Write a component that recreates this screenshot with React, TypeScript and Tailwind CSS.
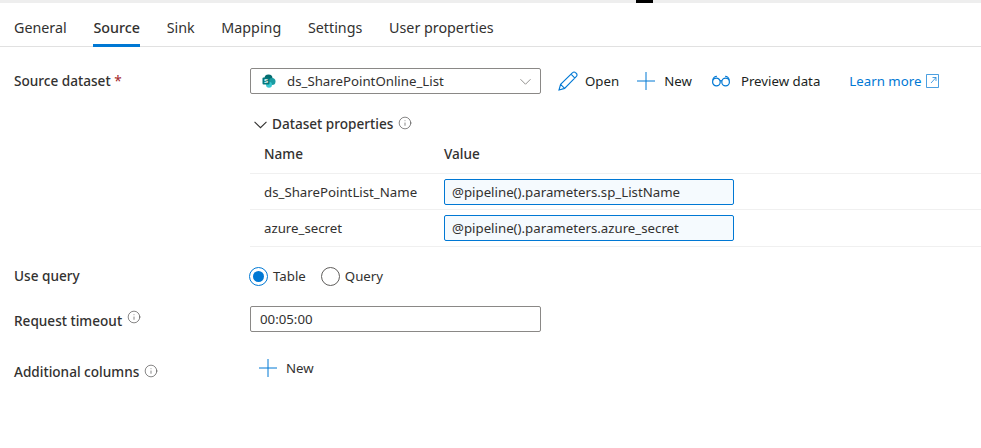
import React from 'react';
import { Info } from 'lucide-react';

const tabs = ['General', 'Source', 'Sink', 'Mapping', 'Settings', 'User properties'];

const InfoIcon = () => <Info size={14} strokeWidth={1} className="text-[#323130]" />;

const SharePointIcon = () => (
  <svg width="14" height="14" viewBox="0 0 14 14">
    <circle cx="6.5" cy="4.5" r="4" fill="#036c70" />
    <circle cx="10" cy="7.5" r="3.5" fill="#1a9ba1" />
    <circle cx="7" cy="10.8" r="3" fill="#37c6d0" />
    <rect x="0.5" y="3.5" width="7" height="7" rx="1" fill="#03787c" />
    <text x="4" y="9" textAnchor="middle" fontSize="6" fontWeight="700" fill="#fff" fontFamily="'Liberation Sans', sans-serif">S</text>
  </svg>
);

const PlusIcon = () => (
  <svg width="18" height="18" viewBox="0 0 18 18" className="shrink-0 text-[#0078d4]">
    <path d="M9 0v18M0 9h18" fill="none" stroke="currentColor" strokeWidth="1" />
  </svg>
);

const Chevron = ({ w, className }: { w: number; className: string }) => (
  <svg width={w} height={w} viewBox="0 0 12 12" className={className}>
    <path d="M0.5 3.5 6 9l5.5-5.5" fill="none" stroke="currentColor" strokeWidth="1" />
  </svg>
);

const PencilIcon = () => (
  <svg width="20" height="20" viewBox="0 0 20 20" className="shrink-0 text-[#0078d4]">
    <path
      d="M1 19l1.6-5.6L14.6 1.6a2 2 0 0 1 2.9 0l.9.9a2 2 0 0 1 0 2.9L6.6 17.4 1 19zM2.6 13.4l4 4M13 3.2l3.9 3.9"
      fill="none"
      stroke="currentColor"
      strokeWidth="1.1"
    />
  </svg>
);

const GlassesIcon = () => (
  <svg width="18" height="12" viewBox="0 0 18 12" className="shrink-0 text-[#0078d4]">
    <ellipse cx="4.4" cy="7" rx="3.8" ry="3.9" fill="none" stroke="currentColor" strokeWidth="1.2" />
    <ellipse cx="13.6" cy="7" rx="3.8" ry="3.9" fill="none" stroke="currentColor" strokeWidth="1.2" />
    <path d="M8 6c.6-.4 1.400-.4 2 0M.6 5.500C1 3 2.500 1.200 5 1.200M17.400 5.500C17 3 15.500 1.200 13 1.200" fill="none" stroke="currentColor" strokeWidth="1.1" />
  </svg>
);

const LinkIcon = () => (
  <svg width="13" height="14" viewBox="0 0 13 14" className="ml-[5px] shrink-0 text-[#0078d4]">
    <path d="M.5.5h12v13H.5zM5 9l5-5.500M6.500 3.500H10V7" fill="none" stroke="currentColor" strokeWidth="1" opacity="0.7" />
  </svg>
);

const ParamInput = ({ value }: { value: string }) => (
  <div className="flex h-[26px] w-[290px] items-center rounded-[2px] border border-[#0078d4] bg-[#f5fafe] px-[7px] pt-[2px] text-[#323130]">
    {value}
  </div>
);

export default function App() {
  return (
    <div className="h-[448px] w-[981px] overflow-hidden bg-white font-['Noto_Sans',sans-serif] text-[13.25px] text-[#323130]">
      <div className="flex h-[3px] bg-[#eeeeee]">
        <div className="ml-[636px] h-[3px] w-[17px] bg-black" />
      </div>

      <div className="flex h-11 gap-[26.7px] border-b border-[#e1e1e1] pl-[14px] text-[14.3px]">
        {tabs.map((t) => (
          <div
            key={t}
            className={t === 'Source' ? 'flex h-11 items-center border-b-[3px] border-[#0078d4] pt-[9px] font-medium' : 'flex h-11 items-center pt-[6px]'}
          >
            {t}
          </div>
        ))}
      </div>

      <div className="mt-[21px] flex h-[26px] items-center pl-[14px]">
        <div className="w-[236px] text-[13.6px] font-medium">
          Source dataset <span className="font-normal text-[#a4262c]">*</span>
        </div>
        <div className="flex h-[26px] w-[291px] items-center rounded-[2px] border border-[#8a8886] pl-[11px] pr-[9px]">
          <SharePointIcon />
          <span className="ml-[11px] flex-1 pt-[2px]">ds_SharePointOnline_List</span>
          <Chevron w={11} className="text-[#8a8886]" />
        </div>
        <div className="ml-[17px] flex items-center text-[#201f1e]">
          <PencilIcon />
          <span className="ml-[7px] pt-[2px]">Open</span>
          <div className="ml-[18px]"><PlusIcon /></div>
          <span className="ml-[9px] pt-[2px]">New</span>
          <div className="ml-[20px]"><GlassesIcon /></div>
          <span className="ml-[11px] pt-[2px]">Preview data</span>
          <span className="ml-[29px] pt-[2px] text-[#0078d4]">Learn more</span>
          <LinkIcon />
        </div>
      </div>

      <div className="ml-[250px] mt-[19px]">
        <div className="flex h-[22px] items-center pl-[4px] text-[13.6px] font-medium">
          <Chevron w={13} className="text-[#323130]" />
          <span className="ml-[5px] mr-[5px]">Dataset properties</span>
          <div className="-mt-[3px]"><InfoIcon /></div>
        </div>
        <div className="flex h-[39px] items-center border-b border-[#f0f0f0] text-[13.6px] font-medium">
          <div className="w-[194px] pl-[14px]">Name</div>
          <div>Value</div>
        </div>
        <div className="flex h-[36px] items-center border-b border-[#f0f0f0]">
          <div className="w-[194px] pl-[14px] pt-[2px]">ds_SharePointList_Name</div>
          <ParamInput value="@pipeline().parameters.sp_ListName" />
        </div>
        <div className="flex h-[37px] items-center border-b border-[#f0f0f0]">
          <div className="w-[194px] pl-[14px] pt-[2px]">azure_secret</div>
          <ParamInput value="@pipeline().parameters.azure_secret" />
        </div>
      </div>

      <div className="mt-[18px] flex h-[22px] items-center pl-[14px]">
        <div className="w-[235px] text-[13.6px] font-medium">Use query</div>
        <div className="flex h-[19px] w-[19px] items-center justify-center rounded-full border border-[#0078d4]">
          <div className="h-[11px] w-[11px] rounded-full bg-[#0078d4]" />
        </div>
        <span className="ml-[5px] pt-[2px]">Table</span>
        <div className="ml-[15px] h-[19px] w-[19px] rounded-full border border-[#605e5c]" />
        <span className="ml-[5px] pt-[2px]">Query</span>
      </div>

      <div className="mt-[19px] flex h-[26px] items-center pl-[14px]">
        <div className="flex w-[236px] items-center pt-[4px] text-[13.6px] font-medium">
          <span className="mr-[5px]">Request timeout</span>
          <div className="-mt-[7px]"><InfoIcon /></div>
        </div>
        <div className="flex h-[26px] w-[291px] items-center rounded-[2px] border border-[#8a8886] px-[9px] pt-[2px]">00:05:00</div>
      </div>

      <div className="mt-[25px] flex h-[22px] items-center pl-[14px]">
        <div className="mt-[8px] flex w-[245px] items-center text-[13.6px] font-medium">
          <span className="mr-[5px]">Additional columns</span>
          <div className="-mt-[3px]"><InfoIcon /></div>
        </div>
        <PlusIcon />
        <span className="ml-[9px] pt-[2px]">New</span>
      </div>
    </div>
  );
}
